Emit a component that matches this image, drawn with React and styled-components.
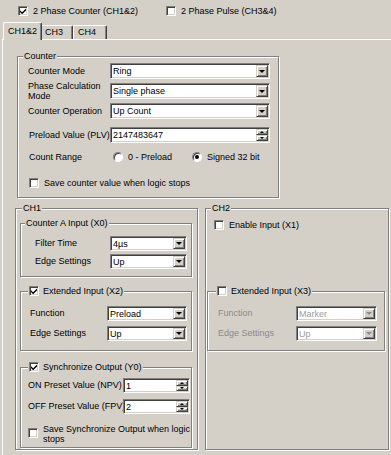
import React from "react";
import styled, { createGlobalStyle, css } from "styled-components";

const GlobalStyle = createGlobalStyle`
  html, body {
    margin: 0;
    padding: 0;
    background: #d4d0c8;
  }
  body {
    font-family: "Liberation Sans", Arial, sans-serif;
    font-size: 9px;
    color: #000;
  }
  * {
    box-sizing: border-box;
  }
`;

//BEVELS

const sunken = css`
  border: 1px solid;
  border-color: #808080 #fff #fff #808080;
  box-shadow: inset 1px 1px 0 #404040, inset -1px -1px 0 #d4d0c8;
`;

const raised = css`
  border: 1px solid;
  border-color: #d4d0c8 #404040 #404040 #d4d0c8;
  box-shadow: inset 1px 1px 0 #fff, inset -1px -1px 0 #808080;
`;

//SMALL CONTROLS

const CheckBox = ({ checked = false }) => (
  <StyledCheckFrame>
    {checked && (
      <svg width="6" height="6" viewBox="0 0 7 7">
        <path d="M0 2.5 L2.5 5 L7 0.5 L7 2.8 L2.5 7.3 L0 4.8 Z" fill="#000" />
      </svg>
    )}
  </StyledCheckFrame>
);

const Combo = ({ value, w, h = 15, disabled = false }) => (
  <StyledCombo $w={w} $h={h} $disabled={disabled}>
    <StyledValue>{value}</StyledValue>
    <StyledDropButton $disabled={disabled} />
  </StyledCombo>
);

const Spin = ({ value, w, h = 15 }) => (
  <StyledCombo $w={w} $h={h}>
    <StyledValue>{value}</StyledValue>
    <StyledSpinButtons>
      <StyledSpinButton $up />
      <StyledSpinButton />
    </StyledSpinButtons>
  </StyledCombo>
);

const Group = ({ caption, checkbox, checked, x, w, h, mt = 0, ml = 0, pad, children }) => (
  <StyledGroup $w={w} $h={h} $mt={mt} $ml={ml}>
    <StyledCaption $x={x}>
      <StyledCaptionText>
        {checkbox && <CheckBox checked={checked} />}
        {caption}
      </StyledCaptionText>
    </StyledCaption>
    <StyledBody $pad={pad}>{children}</StyledBody>
  </StyledGroup>
);

//APP

export default function App() {
  return (
    <>
      <GlobalStyle />
      <StyledWindow>
        <StyledTopBar>
          <StyledOption $w={148}>
            <CheckBox checked />
            <span>{"2 Phase Counter (CH1&2)"}</span>
          </StyledOption>
          <StyledOption>
            <CheckBox />
            <span>{"2 Phase Pulse (CH3&4)"}</span>
          </StyledOption>
        </StyledTopBar>

        <StyledTabStrip>
          <StyledTab $active $w={39}>
            {"CH1&2"}
          </StyledTab>
          <StyledTab $w={33}>CH3</StyledTab>
          <StyledTab $w={34}>CH4</StyledTab>
        </StyledTabStrip>

        <StyledTabPage>
          <Group caption="Counter" x={5} w={262} h={142} ml={2} pad="6px 0 0 10px">
            <StyledRow $label={82} $h={16}>
              <StyledLabel>Counter Mode</StyledLabel>
              <Combo value="Ring" w={160} h={16} />
            </StyledRow>
            <StyledRow $label={82} $h={16} $mt={4}>
              <StyledLabel $lh={10}>
                Phase Calculation
                <br />
                Mode
              </StyledLabel>
              <Combo value="Single phase" w={160} h={16} />
            </StyledRow>
            <StyledRow $label={82} $h={16} $mt={4}>
              <StyledLabel>Counter Operation</StyledLabel>
              <Combo value="Up Count" w={160} h={16} />
            </StyledRow>
            <StyledRow $label={82} $h={16} $mt={8}>
              <StyledLabel $pl={1}>Preload Value (PLV)</StyledLabel>
              <Spin value="2147483647" w={160} h={16} />
            </StyledRow>
            <StyledRow $label={82} $h={14} $mt={7}>
              <StyledLabel $pl={1}>Count Range</StyledLabel>
              <StyledRadioSet>
                <StyledOption $w={79}>
                  <StyledRadio />
                  <span>0 - Preload</span>
                </StyledOption>
                <StyledOption>
                  <StyledRadio $on />
                  <span>Signed 32 bit</span>
                </StyledOption>
              </StyledRadioSet>
            </StyledRow>
            <StyledCheckRow $h={14} $mt={12} $ml={1}>
              <CheckBox />
              <span>Save counter value when logic stops</span>
            </StyledCheckRow>
          </Group>

          <StyledChannelRow>
            <Group caption="CH1" x={6} w={183} h={242} pad="14px 0 0 4px">
              <Group caption="Counter A Input (X0)" x={4} w={172} h={54} pad="12px 0 0 14px">
                <StyledRow $label={75} $h={15}>
                  <StyledLabel>Filter Time</StyledLabel>
                  <Combo value="4µs" w={77} />
                </StyledRow>
                <StyledRow $label={75} $h={15} $mt={3}>
                  <StyledLabel>Edge Settings</StyledLabel>
                  <Combo value="Up" w={77} />
                </StyledRow>
              </Group>

              <Group
                caption="Extended Input (X2)"
                checkbox
                checked
                x={7}
                w={172}
                h={60}
                mt={14}
                pad="14px 0 0 9px"
              >
                <StyledRow $label={77} $h={15}>
                  <StyledLabel>Function</StyledLabel>
                  <Combo value="Preload" w={80} />
                </StyledRow>
                <StyledRow $label={77} $h={15} $mt={5}>
                  <StyledLabel>Edge Settings</StyledLabel>
                  <Combo value="Up" w={80} />
                </StyledRow>
              </Group>

              <Group
                caption="Synchronize Output (Y0)"
                checkbox
                checked
                x={7}
                w={172}
                h={81}
                mt={16}
                pad="10px 0 0 7px"
              >
                <StyledRow $label={95} $h={15}>
                  <StyledLabel>ON Preset Value (NPV)</StyledLabel>
                  <Spin value="1" w={67} />
                </StyledRow>
                <StyledRow $label={95} $h={15} $mt={6}>
                  <StyledLabel>OFF Preset Value (FPV)</StyledLabel>
                  <Spin value="2" w={67} />
                </StyledRow>
                <StyledCheckRow $h={22} $mt={10} $top>
                  <CheckBox />
                  <StyledWrapText>
                    Save Synchronize Output when logic
                    <br />
                    stops
                  </StyledWrapText>
                </StyledCheckRow>
              </Group>
            </Group>

            <Group caption="CH2" x={5} w={184} h={242} pad="11px 0 0 1px">
              <StyledCheckRow $h={10} $ml={7}>
                <CheckBox />
                <span>Enable Input (X1)</span>
              </StyledCheckRow>
              <Group
                caption="Extended Input (X3)"
                checkbox
                x={8}
                w={178}
                h={60}
                mt={61}
                pad="14px 0 0 10px"
              >
                <StyledRow $label={78} $h={15}>
                  <StyledLabel $disabled>Function</StyledLabel>
                  <Combo value="Marker" w={81} disabled />
                </StyledRow>
                <StyledRow $label={78} $h={15} $mt={5}>
                  <StyledLabel $disabled>Edge Settings</StyledLabel>
                  <Combo value="Up" w={81} disabled />
                </StyledRow>
              </Group>
            </Group>
          </StyledChannelRow>
        </StyledTabPage>
      </StyledWindow>
    </>
  );
}

//STYLED COMPONENTS

const StyledWindow = styled.div`
  background: #d4d0c8;

  width: 391px;
  height: 455px;

  overflow: hidden;
`;

const StyledTopBar = styled.div`
  display: flex;
  align-items: center;

  height: 22px;
  padding-left: 18px;
`;

const StyledOption = styled.label`
  display: flex;
  align-items: center;
  gap: 5px;

  width: ${(p) => (p.$w ? `${p.$w}px` : "auto")};

  line-height: 11px;
  white-space: nowrap;
`;

const StyledCheckFrame = styled.span`
  ${sunken}
  background: #fff;

  display: flex;
  align-items: center;
  justify-content: center;
  flex: none;

  width: 10px;
  height: 10px;
`;

const StyledRadio = styled.span`
  background: #fff;

  border: 1px solid;
  border-color: #808080 #fff #fff #808080;
  border-radius: 50%;
  box-shadow: inset 1px 1px 0 #404040;

  display: flex;
  align-items: center;
  justify-content: center;
  flex: none;

  width: 10px;
  height: 10px;

  &::after {
    content: "";
    display: ${(p) => (p.$on ? "block" : "none")};

    background: #000;
    border-radius: 50%;

    width: 4px;
    height: 4px;
  }
`;

const StyledTabStrip = styled.div`
  display: flex;
  align-items: flex-end;

  height: 17px;
  padding-left: 2px;
`;

const StyledTab = styled.div`
  background: #d4d0c8;

  border-top: 1px solid #fff;
  border-left: 1px solid #fff;
  border-right: 1px solid #404040;
  border-radius: 2px 2px 0 0;
  box-shadow: inset -1px 0 0 #808080;

  position: relative;
  z-index: ${(p) => (p.$active ? 1 : 0)};

  width: ${(p) => p.$w}px;
  height: ${(p) => (p.$active ? 18 : 14)}px;
  margin: ${(p) => (p.$active ? "0 -2px -1px 1px" : "0")};
  padding: ${(p) => (p.$active ? "3px 0 0 4px" : "1px 0 0 4px")};

  line-height: 11px;
  white-space: nowrap;
`;

const StyledTabPage = styled.div`
  border-top: 1px solid #fff;
  border-left: 1px solid #fff;

  height: 416px;
  margin-left: 2px;
  padding: 16px 0 0 12px;
`;

const StyledGroup = styled.div`
  border: 1px solid #808080;
  box-shadow: inset 1px 1px 0 #fff, 1px 1px 0 #fff;

  display: flex;
  flex-direction: column;
  flex: none;

  width: ${(p) => p.$w}px;
  height: ${(p) => p.$h}px;
  margin-top: ${(p) => p.$mt}px;
  margin-left: ${(p) => p.$ml}px;
`;

const StyledCaption = styled.div`
  display: flex;
  align-items: center;

  height: 0;
  margin: -1px 0 1px ${(p) => p.$x}px;
`;

const StyledCaptionText = styled.span`
  background: #d4d0c8;

  display: flex;
  align-items: center;
  gap: 4px;

  padding: 0 1px;

  line-height: 11px;
  white-space: nowrap;
`;

const StyledBody = styled.div`
  display: flex;
  flex-direction: column;

  padding: ${(p) => p.$pad};
`;

const StyledRow = styled.div`
  display: grid;
  grid-template-columns: ${(p) => p.$label}px max-content;
  align-items: center;

  height: ${(p) => p.$h}px;
  margin-top: ${(p) => p.$mt || 0}px;
`;

const StyledLabel = styled.span`
  color: ${(p) => (p.$disabled ? "#8a8a8a" : "#000")};

  padding-left: ${(p) => p.$pl || 0}px;

  line-height: ${(p) => p.$lh || 11}px;
  white-space: nowrap;
  overflow: hidden;
`;

const StyledRadioSet = styled.div`
  display: flex;
  align-items: center;

  padding-left: 3px;
`;

const StyledCheckRow = styled.label`
  display: flex;
  align-items: ${(p) => (p.$top ? "flex-start" : "center")};
  gap: 5px;

  height: ${(p) => p.$h}px;
  margin-top: ${(p) => p.$mt || 0}px;
  margin-left: ${(p) => p.$ml || 0}px;

  line-height: 11px;
  white-space: nowrap;

  & > span:first-child {
    margin-top: ${(p) => (p.$top ? "4px" : "0")};
  }
`;

const StyledWrapText = styled.span`
  line-height: 10px;
`;

const StyledChannelRow = styled.div`
  display: flex;
  gap: 7px;

  margin-top: 10px;
`;

const StyledCombo = styled.div`
  ${sunken}
  background: #fff;
  color: ${(p) => (p.$disabled ? "#9a9a9a" : "#000")};

  display: flex;
  align-items: stretch;

  width: ${(p) => p.$w}px;
  height: ${(p) => p.$h}px;
  padding: 1px;
`;

const StyledValue = styled.span`
  display: flex;
  align-items: center;
  flex: 1;

  padding-left: 1px;

  white-space: nowrap;
  overflow: hidden;
`;

const StyledDropButton = styled.span`
  ${raised}
  background: #d4d0c8;

  display: flex;
  align-items: center;
  justify-content: center;
  flex: none;

  width: 12px;

  &::after {
    content: "";
    border-left: 3px solid transparent;
    border-right: 3px solid transparent;
    border-top: 3px solid ${(p) => (p.$disabled ? "#8a8a8a" : "#000")};
  }
`;

const StyledSpinButtons = styled.span`
  display: flex;
  flex-direction: column;
  flex: none;

  width: 12px;
`;

const StyledSpinButton = styled.span`
  ${raised}
  background: #d4d0c8;

  display: flex;
  align-items: center;
  justify-content: center;
  flex: 1;

  &::after {
    content: "";
    border-left: 2px solid transparent;
    border-right: 2px solid transparent;
    ${(p) => (p.$up ? "border-bottom: 2px solid #000;" : "border-top: 2px solid #000;")}
  }
`;
